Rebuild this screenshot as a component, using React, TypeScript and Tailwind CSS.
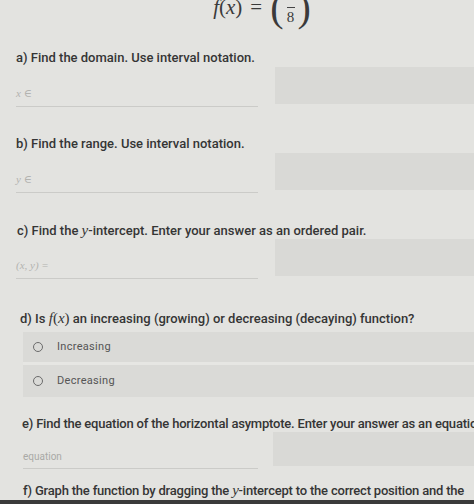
import React from "react";

const serif = { fontFamily: '"Liberation Serif", "DejaVu Serif", serif' };

function M({ children }: { children: React.ReactNode }) {
  return (
    <span className="italic text-[15px]" style={serif}>
      {children}
    </span>
  );
}

function InputRow({ placeholder, math = true }: { placeholder: React.ReactNode; math?: boolean }) {
  return (
    <div className="mt-px flex h-[40px]">
      <div className="ml-[16px] flex w-[242px] items-center border-b border-[#cbcbc8] pt-[14px]">
        <span
          className={math ? "text-[11px] italic text-[#b3b3b0]" : "text-[10px] text-[#a9a9a6]"}
          style={math ? serif : undefined}
        >
          {placeholder}
        </span>
      </div>
      <div className="ml-[17px] h-[37px] flex-1 bg-[#d9d9d6]" />
    </div>
  );
}

function Heading({ children, className = "" }: { children: React.ReactNode; className?: string }) {
  return (
    <div className={`h-[16px] text-[13px] font-medium leading-[16px] text-[#353535] ${className}`}>
      {children}
    </div>
  );
}

function Radio({ label, h }: { label: string; h: string }) {
  return (
    <div className={`ml-[23px] flex items-center bg-[#dadad7] ${h}`}>
      <span className="ml-[10px] h-[10px] w-[10px] rounded-full border-[1.5px] border-[#6b6b6b]" />
      <span className="ml-[14px] text-[11px] tracking-[0.3px] text-[#555555]">{label}</span>
    </div>
  );
}

export default function App() {
  return (
    <div
      className="relative h-[504px] w-[474px] overflow-hidden bg-[#e3e3e0]"
      style={{ fontFamily: 'Roboto, "Liberation Sans", sans-serif' }}
    >
      {/* formula, top cut off */}
      <div className="flex h-[50px] items-start justify-center pl-[50px]">
        <div className="-mt-[12px] flex items-center text-[#3a3a3a]" style={serif}>
          <span className="text-[21px] italic">f</span>
          <span className="text-[21px]">(</span>
          <span className="text-[21px] italic">x</span>
          <span className="text-[21px]">)</span>
          <span className="mx-[8px] text-[21px]">=</span>
          <span className="text-[40px] font-light leading-none">(</span>
          <span className="flex flex-col items-center px-[3px]">
            <span className="text-[14px] leading-[14px] text-transparent">1</span>
            <span className="my-[2px] h-px w-[8px] bg-[#444]" />
            <span className="text-[15px] leading-[15px]">8</span>
          </span>
          <span className="text-[40px] font-light leading-none">)</span>
        </div>
      </div>

      <Heading className="pl-[16px]">a) Find the domain. Use interval notation.</Heading>
      <InputRow placeholder={<>x ∈</>} />

      <Heading className="mt-[29px] pl-[16px]">b) Find the range. Use interval notation.</Heading>
      <InputRow placeholder={<>y ∈</>} />

      <Heading className="mt-[29px] pl-[17px]">
        c) Find the <M>y</M>-intercept. Enter your answer as an ordered pair.
      </Heading>
      <InputRow placeholder={<>(x, y) =</>} />

      <Heading className="mt-[31px] pl-[20px]">
        d) Is <M>f</M>
        <span className="text-[15px]" style={serif}>(</span>
        <M>x</M>
        <span className="text-[15px]" style={serif}>)</span> an increasing (growing) or decreasing (decaying) function?
      </Heading>
      <div className="mt-[6px]">
        <Radio label="Increasing" h="h-[30px]" />
        <div className="ml-[23px] h-[3px] bg-[#e6e6e3]" />
        <Radio label="Decreasing" h="h-[32px]" />
      </div>

      <Heading className="mt-[19px] whitespace-nowrap pl-[22px] tracking-[-0.2px]">
        e) Find the equation of the horizontal asymptote. Enter your answer as an equation.
      </Heading>
      <div className="flex h-[37px]">
        <div className="ml-[23px] flex w-[235px] items-center border-b border-[#cbcbc8] pt-[12px]">
          <span className="text-[10px] text-[#a9a9a6]">equation</span>
        </div>
        <div className="ml-[15px] h-[34px] flex-1 bg-[#d9d9d6]" />
      </div>

      <Heading className="mt-[13px] whitespace-nowrap pl-[23px] tracking-[-0.2px]">
        f) Graph the function by dragging the <M>y</M>-intercept to the correct position and the
      </Heading>

      <div className="absolute bottom-0 left-0 h-[4px] w-full bg-[#3a3a3a]" />
    </div>
  );
}
